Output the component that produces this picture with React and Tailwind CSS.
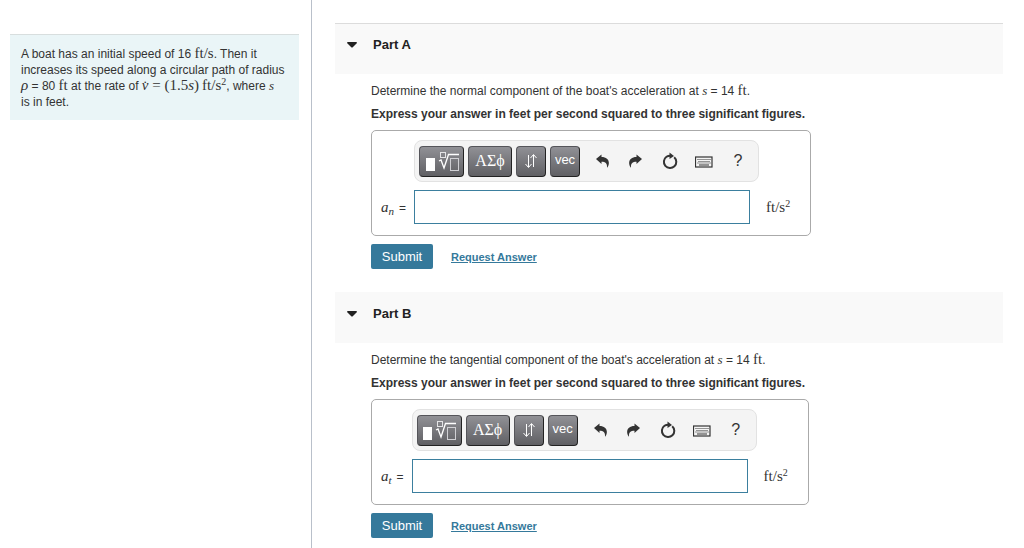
const parts = [
  { id: "a", title: "Part A", component: "normal", sub: "n", first: true },
  { id: "b", title: "Part B", component: "tangential", sub: "t" },
];

function MathText({ children, italic, className = "" }) {
  return (
    <span
      className={`font-['Liberation_Serif',serif] leading-none ${italic ? "italic" : ""} ${className}`}
    >
      {children}
    </span>
  );
}

// ft/s²
function FeetPerSecondSquared() {
  return (
    <MathText className="text-[15px] whitespace-nowrap">
      ft/s<sup className="text-[10px]">2</sup>
    </MathText>
  );
}

function TemplateIcon() {
  return (
    <svg width="36" height="24" viewBox="0 0 36 24" fill="none" aria-hidden="true">
      <rect x="2" y="9" width="9" height="13" fill="#fff" />
      <rect x="16.5" y="3.5" width="5" height="5" stroke="#e4e4e6" />
      <path d="M15 12l2-1 3 8L24.5 5.5H35" stroke="#fff" strokeWidth="1.3" />
      <rect x="26.5" y="9.5" width="8" height="12" stroke="#d0d0d4" />
    </svg>
  );
}

function ArrowsIcon() {
  return (
    <svg width="14" height="16" viewBox="0 0 14 16" fill="none" stroke="#fff" aria-hidden="true">
      <path d="M4.5 2v12M1.5 11l3 3.5 3-3.5M9.5 14V2M6.5 5l3-3.5 3 3.5" />
    </svg>
  );
}

function UndoIcon({ flip }) {
  return (
    <svg
      width="14"
      height="14"
      viewBox="0 0 14 14"
      fill="#333"
      className={flip ? "-scale-x-100" : ""}
      aria-hidden="true"
    >
      <path d="M1 5l5.5-4.5v2.5c5 0 7.8 3 7.3 6.7-.2 1.7-.8 3-1.8 4 .3-3.9-1-5.9-5.5-5.9V10z" />
    </svg>
  );
}

function ResetIcon() {
  return (
    <svg width="16" height="18" viewBox="0 0 16 18" aria-hidden="true">
      <path
        d="M12.2 5.2A6.2 6.2 0 1 1 4.5 4.8Q6 3.7 8.5 3.7"
        fill="none"
        stroke="#333"
        strokeWidth="2"
      />
      <path d="M7.5 0.5l4.5 3.500-4.5 3z" fill="#333" />
    </svg>
  );
}

function KeyboardIcon() {
  return (
    <svg width="18" height="12" viewBox="0 0 18 12" fill="none" className="mt-0.5" aria-hidden="true">
      <rect x="0.5" y="1" width="16.5" height="10" stroke="#333" strokeWidth="1.2" />
      <path
        d="M2.5 3.5h13M3.5 5.5h12M2.5 7h13"
        stroke="#333"
        strokeDasharray="1 1"
      />
      <path d="M4 9h10" stroke="#333" />
    </svg>
  );
}

function DarkButton({ label, className, children }) {
  return (
    <button
      type="button"
      aria-label={label}
      className={`flex h-[31px] items-center justify-center rounded border border-[#55555a] border-r-[#222] border-b-[#222] bg-linear-to-b from-[#919196] to-[#606064] text-white ${className}`}
    >
      {children}
    </button>
  );
}

function IconButton({ label, children }) {
  return (
    <button
      type="button"
      aria-label={label}
      className="flex h-8 w-[34px] items-center justify-center text-base text-[#333]"
    >
      {children}
    </button>
  );
}

function Toolbar() {
  return (
    <div className="flex h-[42px] items-center gap-1 rounded-lg border border-[#e2e2e2] bg-[#f4f4f4] pr-[3px] pl-1">
      <DarkButton label="Templates" className="w-[45px]">
        <TemplateIcon />
      </DarkButton>
      <DarkButton
        label="Symbols"
        className="w-11 font-['Liberation_Serif',serif] text-base"
      >
        ΑΣϕ
      </DarkButton>
      <DarkButton label="Subscripts" className="w-[30px]">
        <ArrowsIcon />
      </DarkButton>
      <DarkButton label="Vector" className="w-[30px] pb-0.5 text-[13px]">
        vec
      </DarkButton>
      <div className="ml-px flex">
        <IconButton label="Undo">
          <UndoIcon />
        </IconButton>
        <IconButton label="Redo">
          <UndoIcon flip />
        </IconButton>
        <IconButton label="Reset">
          <ResetIcon />
        </IconButton>
        <IconButton label="Keyboard shortcuts">
          <KeyboardIcon />
        </IconButton>
        <IconButton label="Help">?</IconButton>
      </div>
    </div>
  );
}

function Part({ id, title, component, sub, first }) {
  return (
    <section className="mb-[23px] last:mb-0">
      <header
        className={`flex h-[51px] items-start border-t bg-[#f9f9f9] pt-[11px] pl-3 ${
          first ? "border-[#dcdcdc]" : "border-[#f9f9f9]"
        }`}
      >
        <button type="button" className="flex items-center gap-4 text-[#222]">
          <svg width="10" height="6" viewBox="0 0 10 6" aria-hidden="true">
            <path d="M0.5 0h9L10 1 5.5 5.5h-1L0 1z" fill="#222" />
          </svg>
          <span className="text-[13px] leading-5 font-bold">{title}</span>
        </button>
      </header>

      <div className="pt-2 pl-9">
        <p className="leading-[18px]">
          Determine the {component} component of the boat's acceleration at{" "}
          <MathText italic className="text-[13px]">
            s
          </MathText>{" "}
          = 14 <MathText className="text-[15px]">ft</MathText>.
        </p>
        <p className="mt-[5px] leading-[18px] font-bold">
          Express your answer in feet per second squared to three significant
          figures.
        </p>

        <div className="mt-[7px] flex h-[106px] w-fit items-end rounded-[5px] border border-[#aaa] pr-5 pb-[11px] pl-[9px]">
          <label
            htmlFor={`answer-${id}`}
            className="flex h-[33px] items-center pr-2 whitespace-nowrap"
          >
            <MathText italic className="mr-[5px] text-[15px]">
              a<sub className="text-[11px]">{sub}</sub>
            </MathText>
            =
          </label>
          <div>
            <Toolbar />
            <div className="mt-2 flex items-center pr-[9px]">
              <input
                id={`answer-${id}`}
                type="text"
                className="h-[34px] w-full border border-[#3b7f9e] bg-white px-2 outline-none"
              />
            </div>
          </div>
          <div className="flex h-[34px] items-center pl-[7px]">
            <FeetPerSecondSquared />
          </div>
        </div>

        <div className="mt-2 flex items-center gap-[18px]">
          <button
            type="button"
            className="h-[25px] w-[62px] rounded-xs bg-[#35799b] text-[13px] text-white"
          >
            Submit
          </button>
          <a
            href="#request"
            className="text-[11px] leading-4 font-bold text-[#35799b] underline"
          >
            Request Answer
          </a>
        </div>
      </div>
    </section>
  );
}

export default function App() {
  return (
    <div className="flex min-h-screen bg-white font-['Liberation_Sans',Arial,sans-serif] text-xs text-[#333]">
      <aside className="w-[312px] shrink-0 border-r border-[#b9c0ca] pt-[34px] pr-3 pl-2.5">
        <div className="border-t border-[#d8dede] bg-[#eaf5f7] pt-[11px] pr-1 pb-2.5 pl-[11px] leading-4">
          A boat has an initial speed of 16{" "}
          <MathText className="text-[15px]">ft/s</MathText>. Then it
          <br />
          increases its speed along a circular path of radius
          <br />
          <MathText italic className="text-[15px]">
            ρ
          </MathText>{" "}
          = 80 <MathText className="text-[15px]">ft</MathText> at the rate of{" "}
          <MathText className="text-[15px]">
            <i>v̇</i> = (1.5<i>s</i>)&thinsp;
          </MathText>
          <FeetPerSecondSquared />, where{" "}
          <MathText italic className="text-[13px]">
            s
          </MathText>
          <br />
          is in feet.
        </div>
      </aside>

      <main className="min-w-0 flex-1 pt-[23px] pr-[21px] pl-[23px]">
        {parts.map((part) => (
          <Part key={part.id} {...part} />
        ))}
      </main>
    </div>
  );
}
